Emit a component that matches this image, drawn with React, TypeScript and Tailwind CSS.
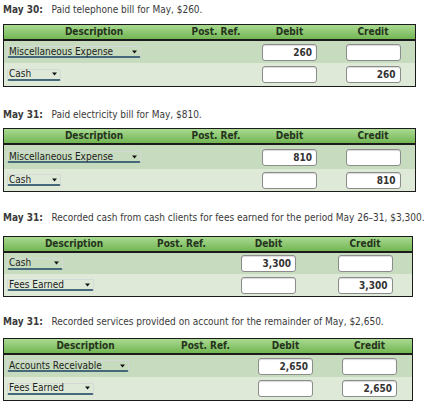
import React from 'react';

type Row = { account: string; selectW: number; debit?: string; credit?: string };
type Entry = {
  date: string;
  text: string;
  cols: string;
  inner: number;
  rowH: [number, number];
  titleTop: number;
  titleGap: number;
  rows: Row[];
};

const FONT = { fontFamily: '"DejaVu Sans Condensed", "DejaVu Sans", Tahoma, sans-serif' };

const ENTRIES: Entry[] = [
  {
    date: 'May 30:',
    text: 'Paid telephone bill for May, $260.',
    cols: 'grid-cols-[180px_64px_83px_84px]',
    inner: 411,
    rowH: [22, 23],
    titleTop: 4,
    titleGap: 8,
    rows: [
      { account: 'Miscellaneous Expense', selectW: 134, debit: '260' },
      { account: 'Cash', selectW: 54, credit: '260' },
    ],
  },
  {
    date: 'May 31:',
    text: 'Paid electricity bill for May, $810.',
    cols: 'grid-cols-[180px_64px_83px_84px]',
    inner: 411,
    rowH: [24, 22],
    titleTop: 22,
    titleGap: 7,
    rows: [
      { account: 'Miscellaneous Expense', selectW: 134, debit: '810' },
      { account: 'Cash', selectW: 54, credit: '810' },
    ],
  },
  {
    date: 'May 31:',
    text: 'Recorded cash from cash clients for fees earned for the period May 26–31, $3,300.',
    cols: 'grid-cols-[140px_75px_99px_94px]',
    inner: 408,
    rowH: [21, 22],
    titleTop: 20,
    titleGap: 12,
    rows: [
      { account: 'Cash', selectW: 56, debit: '3,300' },
      { account: 'Fees Earned', selectW: 87, credit: '3,300' },
    ],
  },
  {
    date: 'May 31:',
    text: 'Recorded services provided on account for the remainder of May, $2,650.',
    cols: 'grid-cols-[163px_77px_83px_85px]',
    inner: 408,
    rowH: [22, 23],
    titleTop: 19,
    titleGap: 10,
    rows: [
      { account: 'Accounts Receivable', selectW: 122, debit: '2,650' },
      { account: 'Fees Earned', selectW: 87, credit: '2,650' },
    ],
  },
];

function AccountSelect({ label, width }: { label: string; width: number }) {
  return (
    <div
      className="flex items-center justify-between h-[12px] ml-[2px] pl-[1px] pr-[2px] border border-[#d3d9d6] border-b-[2px] border-b-[#45687a] rounded-[2px] text-[10px] leading-none text-[#222]"
      style={{ width }}
    >
      <span>{label}</span>
      <svg width="5" height="4" viewBox="0 0 5 4" className="mr-[1px]">
        <path d="M0 0.5 L5 0.5 L2.5 3.5 Z" fill="#111" />
      </svg>
    </div>
  );
}

function AmountBox({ value }: { value?: string }) {
  return (
    <div className="w-[55px] h-[17px] bg-white border border-[#8c8c8c] rounded-[3px] shadow-[inset_0_1px_1px_rgba(0,0,0,0.15)] flex items-center justify-end pr-[4px] text-[10px] font-bold text-[#333]">
      {value}
    </div>
  );
}

function JournalTable({ e }: { e: Entry }) {
  return (
    <div className="border border-[#1b1b1b]" style={{ width: e.inner + 2 }}>
      <div className={`grid ${e.cols} h-[16px] border-b-[2px] border-[#1b1b1b] bg-gradient-to-b from-[#a9d991] to-[#72b652] text-[10px] font-bold text-[#24331c] items-center text-center leading-none`}>
        <div>Description</div>
        <div>Post. Ref.</div>
        <div>Debit</div>
        <div>Credit</div>
      </div>
      {e.rows.map((r, i) => (
        <div
          key={i}
          className={`grid ${e.cols} items-center ${i === 0 ? 'bg-[#c7dbbf]' : 'bg-[#dfe9d8]'}`}
          style={{ height: e.rowH[i] }}
        >
          <div className="pl-[1px]">
            <AccountSelect label={r.account} width={r.selectW} />
          </div>
          <div />
          <div className="flex justify-center">
            <AmountBox value={r.debit} />
          </div>
          <div className="flex justify-center">
            <AmountBox value={r.credit} />
          </div>
        </div>
      ))}
    </div>
  );
}

export default function App() {
  return (
    <div className="w-[427px] h-[411px] bg-white pl-[3px] overflow-hidden" style={FONT}>
      {ENTRIES.map((e, i) => (
        <section key={i} style={{ paddingTop: e.titleTop }}>
          <p className="text-[10px] leading-[12px] text-[#3a3a3a] whitespace-nowrap" style={{ marginBottom: e.titleGap }}>
            <span className="font-bold">{e.date}</span>
            {'  '}
            <span className="whitespace-pre">{'  '}</span>
            {e.text}
          </p>
          <JournalTable e={e} />
        </section>
      ))}
    </div>
  );
}
